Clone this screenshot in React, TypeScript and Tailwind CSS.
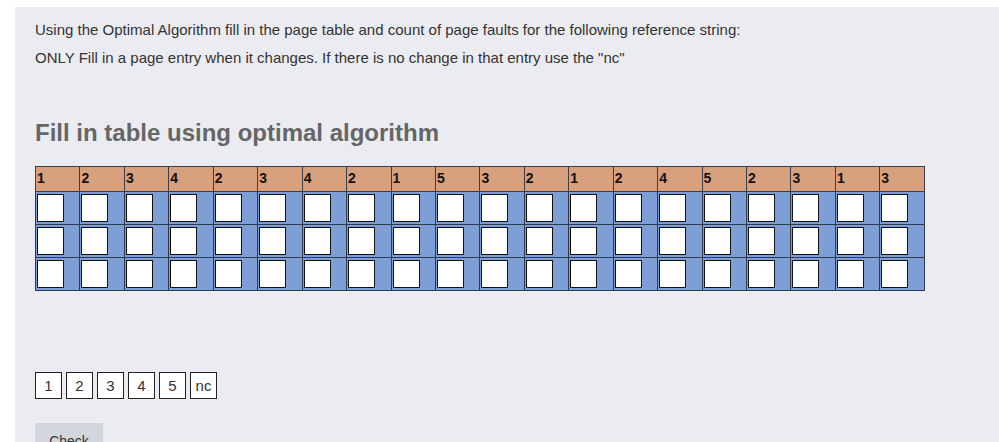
import { useState } from "react";

const refString = [1, 2, 3, 4, 2, 3, 4, 2, 1, 5, 3, 2, 1, 2, 4, 5, 2, 3, 1, 3];
const choices = ["1", "2", "3", "4", "5", "nc"];

export default function App() {
  const [cells, setCells] = useState<string[][]>(() => [0, 1, 2].map(() => refString.map(() => "")));

  const update = (r: number, c: number, v: string) =>
    setCells(cells.map((row, i) => (i === r ? row.map((x, j) => (j === c ? v : x)) : row)));

  return (
    <div className="h-[442px] overflow-hidden bg-white pl-[15px] pt-[7px] font-['Liberation_Sans',Arial,sans-serif] text-[#333]">
      <div className="bg-[#ebecf1] h-[435px] pl-[20px] pt-[13px]">
        <p className="text-[15px] leading-[20px]">
          Using the Optimal Algorithm fill in the page table and count of page faults for the following reference string:
        </p>
        <p className="text-[15px] leading-[20px] mt-[8px]">
          ONLY Fill in a page entry when it changes. If there is no change in that entry use the "nc"
        </p>

        <h2 className="mt-[51px] text-[24px] leading-[28px] font-bold text-[#666]">Fill in table using optimal algorithm</h2>

        <table className="mt-[19px] table-fixed border-collapse w-[890px]">
          <thead>
            <tr className="h-[25px]">
              {refString.map((n, i) => (
                <th
                  key={i}
                  className="bg-[#d9a07d] border border-[#3a3f4a] text-left align-top pt-[4px] pl-[1px] text-[14px] leading-[15px] font-bold text-[#111]"
                >
                  {n}
                </th>
              ))}
            </tr>
          </thead>
          <tbody>
            {cells.map((row, r) => (
              <tr key={r} className="h-[33px]">
                {row.map((v, c) => (
                  <td key={c} className="bg-[#7e9fd5] border border-[#2e3a4e] p-0 pl-[1px] align-middle">
                    <input
                      value={v}
                      onChange={(e) => update(r, c, e.target.value)}
                      className="block w-[27px] h-[28px] bg-white border border-[#111] outline-none text-[13px] text-center"
                    />
                  </td>
                ))}
              </tr>
            ))}
          </tbody>
        </table>

        <div className="mt-[81px] flex gap-[4px]">
          {choices.map((c) => (
            <button
              key={c}
              className="w-[27px] h-[27px] bg-white border border-[#222] text-[15px] leading-none text-[#333] flex items-center justify-center"
            >
              {c}
            </button>
          ))}
        </div>

        <button className="mt-[24px] w-[68px] h-[34px] bg-[#d3d6dc] text-[14px] text-[#333] flex items-start justify-center pt-[8px]">
          Check
        </button>
      </div>
    </div>
  );
}
